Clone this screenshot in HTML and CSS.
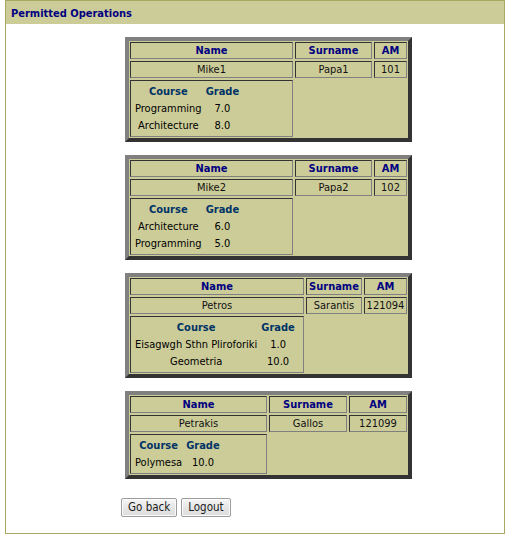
FILE: index.html
```html
<!DOCTYPE html>
<html>
<head>
<meta charset="utf-8">
<title>Permitted Operations</title>
<link rel="stylesheet" href="styles.css">
</head>
<body>
<div class="panel">
  <div class="panel-head">Permitted Operations</div>
  <div class="panel-body">
    <div class="card">
      <table class="student">
        <tr><th class="c-name">Name</th><th class="c-surname">Surname</th><th class="c-am">AM</th></tr>
        <tr><td>Mike1</td><td>Papa1</td><td>101</td></tr>
        <tr><td class="courses-cell">
          <table class="courses">
            <tr><th>Course</th><th>Grade</th></tr>
            <tr><td>Programming</td><td>7.0</td></tr>
            <tr><td>Architecture</td><td>8.0</td></tr>
          </table>
        </td></tr>
      </table>
    </div>
    <div class="card">
      <table class="student">
        <tr><th class="c-name">Name</th><th class="c-surname">Surname</th><th class="c-am">AM</th></tr>
        <tr><td>Mike2</td><td>Papa2</td><td>102</td></tr>
        <tr><td class="courses-cell">
          <table class="courses">
            <tr><th>Course</th><th>Grade</th></tr>
            <tr><td>Architecture</td><td>6.0</td></tr>
            <tr><td>Programming</td><td>5.0</td></tr>
          </table>
        </td></tr>
      </table>
    </div>
    <div class="card">
      <table class="student student--wide">
        <tr><th class="c-name">Name</th><th class="c-surname">Surname</th><th class="c-am">AM</th></tr>
        <tr><td>Petros</td><td>Sarantis</td><td>121094</td></tr>
        <tr><td class="courses-cell">
          <table class="courses">
            <tr><th>Course</th><th>Grade</th></tr>
            <tr><td>Eisagwgh Sthn Pliroforiki</td><td>1.0</td></tr>
            <tr><td>Geometria</td><td>10.0</td></tr>
          </table>
        </td></tr>
      </table>
    </div>
    <div class="card card--last">
      <table class="student student--short">
        <tr><th class="c-name">Name</th><th class="c-surname">Surname</th><th class="c-am">AM</th></tr>
        <tr><td>Petrakis</td><td>Gallos</td><td>121099</td></tr>
        <tr><td class="courses-cell">
          <table class="courses">
            <tr><th>Course</th><th>Grade</th></tr>
            <tr><td>Polymesa</td><td>10.0</td></tr>
          </table>
        </td></tr>
      </table>
    </div>
    <div class="actions">
      <button class="btn" type="button">Go back</button>
      <button class="btn" type="button">Logout</button>
    </div>
  </div>
</div>
</body>
</html>
```

FILE: styles.css
```css
html, body {
  margin: 0;
  padding: 0;
  background: #ffffff;
}

body {
  font-family: "DejaVu Sans Condensed", "DejaVu Sans", sans-serif;
  font-stretch: condensed;
  font-size: 11px;
  line-height: 13px;
  color: #000000;
}

.panel {
  box-sizing: border-box;
  width: 500px;
  margin-left: 5px;
  border: 1px solid #a8a862;
}

.panel-head {
  background: #cccc99;
  color: #000080;
  font-weight: bold;
  padding: 6px 5px 4px;
  line-height: 13px;
}

.panel-body {
  padding: 13px 0 16px 115px;
  display: flex;
  flex-direction: column;
  align-items: flex-start;
}

.card {
  margin-left: 4px;
  margin-bottom: 13px;
  background: #cccc99;
  border: 4px solid;
  border-color: #808080 #333333 #333333 #808080;
}

.card--last {
  margin-bottom: 19px;
}

.student {
  margin: -1px;
  border-spacing: 2px;
  border-collapse: separate;
}

.student > tbody > tr > th,
.student > tbody > tr > td {
  box-sizing: border-box;
  padding: 1px;
  border: 1px solid;
  border-color: #333333 #808080 #808080 #333333;
  text-align: center;
  vertical-align: middle;
  height: 17px;
  color: #111111;
}

.student > tbody > tr > th {
  color: #000080;
  font-weight: bold;
}

.student .c-name { width: 163px; }
.student .c-surname { width: 77px; }
.student .c-am { width: 33px; }

.student--wide .c-name { width: 174px; }
.student--wide .c-surname { width: 56px; }
.student--wide .c-am { width: 43px; }

.student--short .c-name { width: 137px; }
.student--short .c-surname { width: 78px; }
.student--short .c-am { width: 58px; }

.student > tbody > tr > td.courses-cell {
  text-align: left;
  vertical-align: top;
  height: auto;
}

.courses {
  border-spacing: 2px;
  border-collapse: separate;
}

.courses th,
.courses td {
  padding: 1px;
  text-align: center;
  color: #000000;
}

.courses th {
  color: #003366;
  font-weight: bold;
}

.actions {
  display: flex;
  gap: 4px;
}

.btn {
  font-family: "DejaVu Sans Condensed", "DejaVu Sans", sans-serif;
  font-stretch: condensed;
  font-size: 11.5px;
  line-height: 15px;
  height: 19px;
  padding: 0 6px;
  color: #1a1a1a;
  background: linear-gradient(#f6f6f6, #e6e6e6 50%, #dcdcdc);
  border: 1px solid #9c9c9c;
  border-radius: 2px;
  box-shadow: inset 0 0 0 1px #fbfbfb;
}
```
